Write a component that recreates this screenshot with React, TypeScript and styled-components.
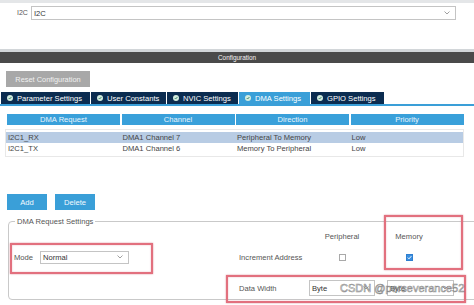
import React from 'react';
import styled, { createGlobalStyle } from 'styled-components';

const Global = createGlobalStyle`
  html, body { margin: 0; padding: 0; background: #fff; }
  body { font-family: "Liberation Sans", Arial, sans-serif; overflow: hidden; }
  * { box-sizing: border-box; }
`;

const Page = styled.div`
  position: relative;
  width: 474px;
  height: 305px;
  overflow: hidden;
  background: #fff;
`;

const TopBar = styled.div`
  height: 49px;
  border-top: 3px solid #e4e6e8;
  display: flex;
  align-items: flex-start;
  gap: 3px;
  padding: 3px 18px 0 17px;
`;

const TopLabel = styled.span`
  font-size: 7px;
  color: #555;
  line-height: 14px;
`;

const Select = styled.div<{ $w?: number; $h?: number }>`
  position: relative;
  ${p => (p.$w ? `width: ${p.$w}px;` : 'flex: 1;')}
  height: ${p => p.$h ?? 14}px;
  border: 1px solid #c4c4c4;
  background: #fff;
  display: flex;
  align-items: center;
  padding: 0 14px 0 2px;
  font-size: 7.6px;
  color: #333;
`;

const Chevron = styled.svg`
  position: absolute;
  right: 5px;
  top: 50%;
  margin-top: -2px;
`;

const Divider = styled.div`
  height: 3px;
  background: #d2d6d9;
`;

const ConfigHeader = styled.div`
  height: 11px;
  background: #4a4a4a;
  color: #f2f2f2;
  font-size: 6.4px;
  line-height: 11px;
  text-align: center;
`;

const Body = styled.div`
  display: flex;
  height: 242px;
`;

const LeftRail = styled.div`
  width: 3px;
  background: #d6dadd;
`;

const Main = styled.div`
  flex: 1;
  display: flex;
  flex-direction: column;
  align-items: flex-start;
`;

const ResetButton = styled.div`
  margin: 8px 0 0 6px;
  width: 84px;
  height: 16px;
  background: #a8a8a8;
  color: #f1f1f1;
  font-size: 7.4px;
  display: flex;
  align-items: center;
  justify-content: center;
`;

const TabBar = styled.div`
  margin-top: 5px;
  align-self: stretch;
  display: flex;
  gap: 1px;
  padding-left: 1px;
  border-bottom: 2px solid #3a9fd8;
`;

const Tab = styled.div<{ $w: number; $active?: boolean }>`
  width: ${p => p.$w}px;
  height: 12px;
  background: ${p => (p.$active ? '#3a9fd8' : '#0b2c50')};
  color: #fff;
  font-size: 7.6px;
  display: flex;
  align-items: center;
  gap: 4px;
  padding-left: 6px;
  white-space: nowrap;
`;

const TableWrap = styled.div`
  margin: 8px 0 0 7px;
  display: flex;
  flex-direction: column;
`;

const Grid = styled.div`
  display: grid;
  grid-template-columns: 113px 113px 113px 113px;
  column-gap: 1.5px;
`;

const HeaderCell = styled.div`
  height: 11px;
  background: #39a0da;
  color: #e9f5fc;
  font-size: 7.6px;
  display: flex;
  align-items: center;
  justify-content: center;
`;

const RowsBox = styled.div`
  margin: 4px 0 0 -2px;
  width: 459px;
  border: 1px solid #e8e8e8;
  padding: 2px 0;
`;

const Row = styled(Grid)<{ $selected?: boolean }>`
  height: 11px;
  padding-left: 2px;
  background: ${p => (p.$selected ? '#b8cce4' : 'transparent')};
  align-items: center;
`;

const Cell = styled.div`
  font-size: 7.6px;
  color: #444;
`;

const ButtonRow = styled.div`
  margin: 37px 0 0 7px;
  display: flex;
  gap: 8px;
`;

const BlueButton = styled.div`
  width: 40px;
  height: 16px;
  background: #3a9fd8;
  color: #f4faff;
  font-size: 7.6px;
  display: flex;
  align-items: center;
  justify-content: center;
`;

const Fieldset = styled.fieldset`
  margin: 7px 0 0 8px;
  width: 480px;
  border: 1px solid #c9c9c9;
  border-radius: 4px;
  padding: 5px 0 3px 5px;
  display: grid;
  grid-template-columns: 225px 70px 66px 68px;
  grid-template-rows: 10px 9px 14px 16px 16px;
  align-items: center;
`;

const Legend = styled.legend`
  font-size: 7.6px;
  color: #555;
  padding: 0 2px;
  margin-left: 1px;
  line-height: 9px;
`;

const ColHead = styled.div<{ $col: number; $row: number }>`
  grid-column: ${p => p.$col};
  grid-row: ${p => p.$row};
  font-size: 7.6px;
  color: #555;
  text-align: center;
`;

const FieldLabel = styled.div<{ $col?: number; $row?: number }>`
  ${p => (p.$col ? `grid-column: ${p.$col};` : '')}
  ${p => (p.$row ? `grid-row: ${p.$row};` : '')}
  font-size: 7.6px;
  color: #555;
`;

const ModeCell = styled.div`
  grid-column: 1;
  grid-row: 3;
  display: flex;
  align-items: center;
  gap: 7px;
`;

const CheckCell = styled.div<{ $col: number; $row: number; $ml?: number }>`
  grid-column: ${p => p.$col};
  grid-row: ${p => p.$row};
  display: flex;
  justify-content: center;
  margin-left: ${p => p.$ml ?? 0}px;
`;

const Check = styled.div<{ $on?: boolean }>`
  width: 7px;
  height: 7px;
  border: 1px solid ${p => (p.$on ? '#2f7fd0' : '#a9a9a9')};
  background: ${p => (p.$on ? '#3a8fe0' : '#fff')};
  display: flex;
  align-items: center;
  justify-content: center;
`;

const SelCell = styled.div<{ $col: number; $row: number; $ml?: number }>`
  grid-column: ${p => p.$col};
  grid-row: ${p => p.$row};
  margin-left: ${p => p.$ml ?? 0}px;
`;

const Annot = styled.div<{ $x: number; $y: number; $w: number; $h: number }>`
  position: absolute;
  left: ${p => p.$x}px;
  top: ${p => p.$y}px;
  width: ${p => p.$w}px;
  height: ${p => p.$h}px;
  border: 2.5px solid #e2707e;
  box-shadow: 0 0 1.5px rgba(200, 60, 80, 0.6), inset 0 0 1.5px rgba(200, 60, 80, 0.5);
  pointer-events: none;
`;

const Watermark = styled.div`
  position: absolute;
  left: 340px;
  top: 282px;
  font-size: 11px;
  color: rgba(255, 255, 255, 0.55);
  -webkit-text-stroke: 0.6px rgba(110, 110, 110, 0.8);
  white-space: nowrap;
  pointer-events: none;
`;

const ChevronIcon = () => (
  <Chevron width="6" height="4" viewBox="0 0 6 4">
    <path d="M0.5 0.5 L3 3 L5.5 0.5" fill="none" stroke="#888" strokeWidth="0.8" />
  </Chevron>
);

const TabIcon = () => (
  <svg width="6" height="6" viewBox="0 0 6 6">
    <circle cx="3" cy="3" r="3" fill="#d3ecdf" />
    <path d="M1.7 3 L2.7 4 L4.4 2" fill="none" stroke="#2c7a5a" strokeWidth="0.8" />
  </svg>
);

const tabs = [
  { label: 'Parameter Settings', w: 89 },
  { label: 'User Constants', w: 75 },
  { label: 'NVIC Settings', w: 71 },
  { label: 'DMA Settings', w: 71, active: true },
  { label: 'GPIO Settings', w: 73 },
];

const rows = [
  { req: 'I2C1_RX', ch: 'DMA1 Channel 7', dir: 'Peripheral To Memory', pr: 'Low', sel: true },
  { req: 'I2C1_TX', ch: 'DMA1 Channel 6', dir: 'Memory To Peripheral', pr: 'Low' },
];

export default function App() {
  return (
    <Page>
      <Global />
      <TopBar>
        <TopLabel>I2C</TopLabel>
        <Select>
          I2C
          <ChevronIcon />
        </Select>
      </TopBar>
      <Divider />
      <ConfigHeader>Configuration</ConfigHeader>
      <Body>
        <LeftRail />
        <Main>
          <ResetButton>Reset Configuration</ResetButton>
          <TabBar>
            {tabs.map(t => (
              <Tab key={t.label} $w={t.w} $active={t.active}>
                <TabIcon />
                {t.label}
              </Tab>
            ))}
          </TabBar>
          <TableWrap>
            <Grid>
              <HeaderCell>DMA Request</HeaderCell>
              <HeaderCell>Channel</HeaderCell>
              <HeaderCell>Direction</HeaderCell>
              <HeaderCell>Priority</HeaderCell>
            </Grid>
            <RowsBox>
              {rows.map(r => (
                <Row key={r.req} $selected={r.sel}>
                  <Cell>{r.req}</Cell>
                  <Cell>{r.ch}</Cell>
                  <Cell>{r.dir}</Cell>
                  <Cell>{r.pr}</Cell>
                </Row>
              ))}
            </RowsBox>
          </TableWrap>
          <ButtonRow>
            <BlueButton>Add</BlueButton>
            <BlueButton>Delete</BlueButton>
          </ButtonRow>
          <Fieldset>
            <Legend>DMA Request Settings</Legend>
            <ColHead $col={3} $row={1}>Peripheral</ColHead>
            <ColHead $col={4} $row={1}>Memory</ColHead>
            <ModeCell>
              <FieldLabel>Mode</FieldLabel>
              <Select $w={89} $h={13}>
                Normal
                <ChevronIcon />
              </Select>
            </ModeCell>
            <FieldLabel $col={2} $row={3}>Increment Address</FieldLabel>
            <CheckCell $col={3} $row={3}>
              <Check />
            </CheckCell>
            <CheckCell $col={4} $row={3}>
              <Check $on>
                <svg width="5" height="5" viewBox="0 0 5 5">
                  <path d="M0.8 2.6 L2 3.8 L4.3 1.2" fill="none" stroke="#fff" strokeWidth="1" />
                </svg>
              </Check>
            </CheckCell>
            <FieldLabel $col={2} $row={5}>Data Width</FieldLabel>
            <SelCell $col={3} $row={5}>
              <Select $w={66} $h={16}>
                Byte
                <ChevronIcon />
              </Select>
            </SelCell>
            <SelCell $col={4} $row={5} $ml={12}>
              <Select $w={67} $h={16}>
                Byte
                <ChevronIcon />
              </Select>
            </SelCell>
          </Fieldset>
        </Main>
      </Body>
      <Annot $x={10} $y={243} $w={143} $h={31} />
      <Annot $x={384} $y={215} $w={79} $h={55} />
      <Annot $x={226} $y={275} $w={240} $h={28} />
      <Watermark>CSDN @perseverance52</Watermark>
    </Page>
  );
}
